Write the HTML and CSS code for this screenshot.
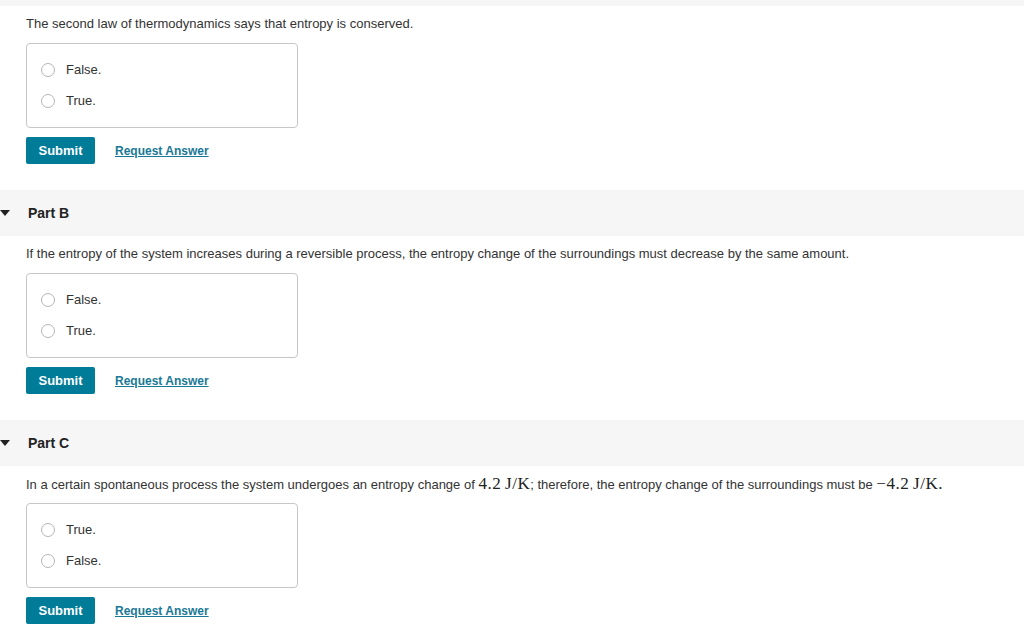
FILE: index.html
```html
<!DOCTYPE html>
<html>
<head>
<meta charset="utf-8">
<link rel="stylesheet" href="styles.css">
</head>
<body>
<div class="band band-top"></div>
<section class="part">
  <p class="question">The second law of thermodynamics says that entropy is conserved.</p>
  <div class="choices">
    <label class="choice"><span class="radio"></span><span>False.</span></label>
    <label class="choice"><span class="radio"></span><span>True.</span></label>
  </div>
  <div class="actions">
    <button class="submit">Submit</button>
    <a class="request" href="#">Request Answer</a>
  </div>
</section>

<div class="band"><span class="caret"></span><span class="part-title">Part B</span></div>
<section class="part">
  <p class="question">If the entropy of the system increases during a reversible process, the entropy change of the surroundings must decrease by the same amount.</p>
  <div class="choices">
    <label class="choice"><span class="radio"></span><span>False.</span></label>
    <label class="choice"><span class="radio"></span><span>True.</span></label>
  </div>
  <div class="actions">
    <button class="submit">Submit</button>
    <a class="request" href="#">Request Answer</a>
  </div>
</section>

<div class="band"><span class="caret"></span><span class="part-title">Part C</span></div>
<section class="part">
  <p class="question">In a certain spontaneous process the system undergoes an entropy change of <span class="math">4.2&#8201;J/K</span>; therefore, the entropy change of the surroundings must be <span class="math">&minus;4.2&#8201;J/K.</span></p>
  <div class="choices">
    <label class="choice"><span class="radio"></span><span>True.</span></label>
    <label class="choice"><span class="radio"></span><span>False.</span></label>
  </div>
  <div class="actions">
    <button class="submit">Submit</button>
    <a class="request" href="#">Request Answer</a>
  </div>
</section>
</body>
</html>
```

FILE: styles.css
```css
html, body {
  margin: 0;
  padding: 0;
  background: #fff;
}
body {
  font-family: "Liberation Sans", Arial, Helvetica, sans-serif;
  font-size: 13px;
  color: #333;
  width: 1024px;
  height: 636px;
  overflow: hidden;
}
.band {
  background: #f6f6f6;
  height: 46px;
  display: flex;
  align-items: center;
  margin-top: 26px;
}
.band-top {
  height: 6px;
  margin-top: 0;
}
.caret {
  width: 0;
  height: 0;
  border-left: 5px solid transparent;
  border-right: 5px solid transparent;
  border-top: 6px solid #222;
  margin-right: 18px;
}
.part-title {
  font-weight: bold;
  font-size: 14px;
  color: #222;
}
.part {
  padding-left: 26px;
}
.question {
  margin: 9px 0 0;
  height: 17px;
  line-height: 17px;
  color: #333;
  white-space: nowrap;
}
.math {
  font-family: "Liberation Serif", "Times New Roman", serif;
  font-size: 17px;
  line-height: 1;
  letter-spacing: 0.5px;
  color: #222;
}
.choices {
  margin-top: 11px;
  width: 270px;
  border: 1px solid #c6c6c6;
  border-radius: 4px;
  padding: 10px 0 11px;
}
.choice {
  display: flex;
  align-items: center;
  height: 31px;
  padding-left: 14px;
  color: #333;
}
.radio {
  width: 12px;
  height: 12px;
  border: 1px solid #b5b5b5;
  border-radius: 50%;
  background: #fff;
  margin-right: 11px;
}
.actions {
  display: flex;
  align-items: center;
  margin-top: 9px;
}
.submit {
  background: #007c98;
  color: #fff;
  border: 0;
  border-radius: 2px;
  width: 69px;
  height: 27px;
  font-family: "Liberation Sans", Arial, sans-serif;
  font-size: 13px;
  font-weight: bold;
  padding: 0;
}
.request {
  margin-left: 20px;
  color: #1a7896;
  font-weight: bold;
  font-size: 12px;
  text-decoration: underline;
}
```
